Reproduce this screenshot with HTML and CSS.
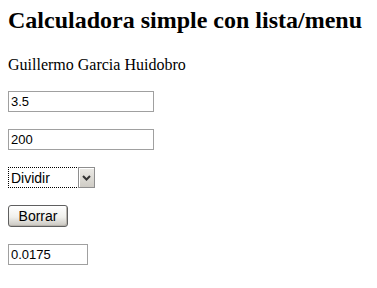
FILE: index.html
```html
<!DOCTYPE html>
<html lang="es">

<head>
    <meta charset="UTF-8">
    <meta name="viewport" content="width=device-width, initial-scale=1.0">
    <title>Calculadora simple con lista/menu</title>
    <link rel="stylesheet" href="styles.css">
</head>

<body>
    <h2 class="titulo">Calculadora simple con lista/menu</h2>
    <p class="autor">Guillermo Garcia Huidobro</p>
    <form class="calc">
        <input class="campo" type="text" value="3.5">
        <input class="campo" type="text" value="200">
        <span class="lista">
            <select class="lista-sel">
                <option>Sumar</option>
                <option>Restar</option>
                <option>Multiplicar</option>
                <option selected>Dividir</option>
            </select>
            <span class="lista-flecha">
                <svg width="9" height="6" viewBox="0 0 9 6">
                    <path d="M1 1 L4.5 4.5 L8 1" fill="none" stroke="#333" stroke-width="2"/>
                </svg>
            </span>
        </span>
        <button class="boton" type="reset">Borrar</button>
        <input class="campo resultado" type="text" value="0.0175">
    </form>
</body>

</html>
```

FILE: styles.css
```css
body {
    margin: 0;
    padding: 7px 8px;
    font-family: "Liberation Serif", "Times New Roman", serif;
    color: #000;
    background: #fff;
}

.titulo {
    margin: 0;
    font-size: 24px;
    font-weight: bold;
    line-height: 27px;
}

.autor {
    margin: 22px 0 0;
    font-size: 16px;
    line-height: 18px;
}

.calc {
    display: flex;
    flex-direction: column;
    align-items: flex-start;
    gap: 17px;
    margin-top: 17px;
}

.campo {
    box-sizing: border-box;
    width: 146px;
    height: 21px;
    margin: 0;
    padding: 1px 2px;
    border: 1px solid #a0a0a0;
    font-family: "Liberation Sans", Arial, sans-serif;
    font-size: 13px;
    color: #000;
    background: #fff;
    outline: none;
}

.resultado {
    width: 80px;
}

.lista {
    position: relative;
    display: inline-block;
    width: 87px;
    height: 21px;
}

.lista-sel {
    appearance: none;
    box-sizing: border-box;
    width: 87px;
    height: 21px;
    margin: 0;
    padding: 0 2px;
    border: 1px dotted #000;
    font-family: "Liberation Sans", Arial, sans-serif;
    font-size: 14px;
    color: #000;
    background: #fff;
    outline: none;
}

.lista-flecha {
    position: absolute;
    top: 0;
    right: 0;
    width: 17px;
    height: 21px;
    display: flex;
    align-items: center;
    justify-content: center;
    background: linear-gradient(#ebeae6, #cfccc5);
    border: 1px solid #8e8e8e;
    box-shadow: inset 1px 1px 0 #fff;
    box-sizing: border-box;
}

.boton {
    box-sizing: border-box;
    width: 60px;
    height: 22px;
    margin: 0;
    padding: 0;
    border: 1px solid #5f5f5f;
    border-radius: 3px;
    font-family: "Liberation Sans", Arial, sans-serif;
    font-size: 14px;
    color: #000;
    background: linear-gradient(#ffffff 0%, #f0f0ec 55%, #c9c6c0 100%);
    box-shadow: inset -1px -1px 0 #b8b4ad;
}
```
